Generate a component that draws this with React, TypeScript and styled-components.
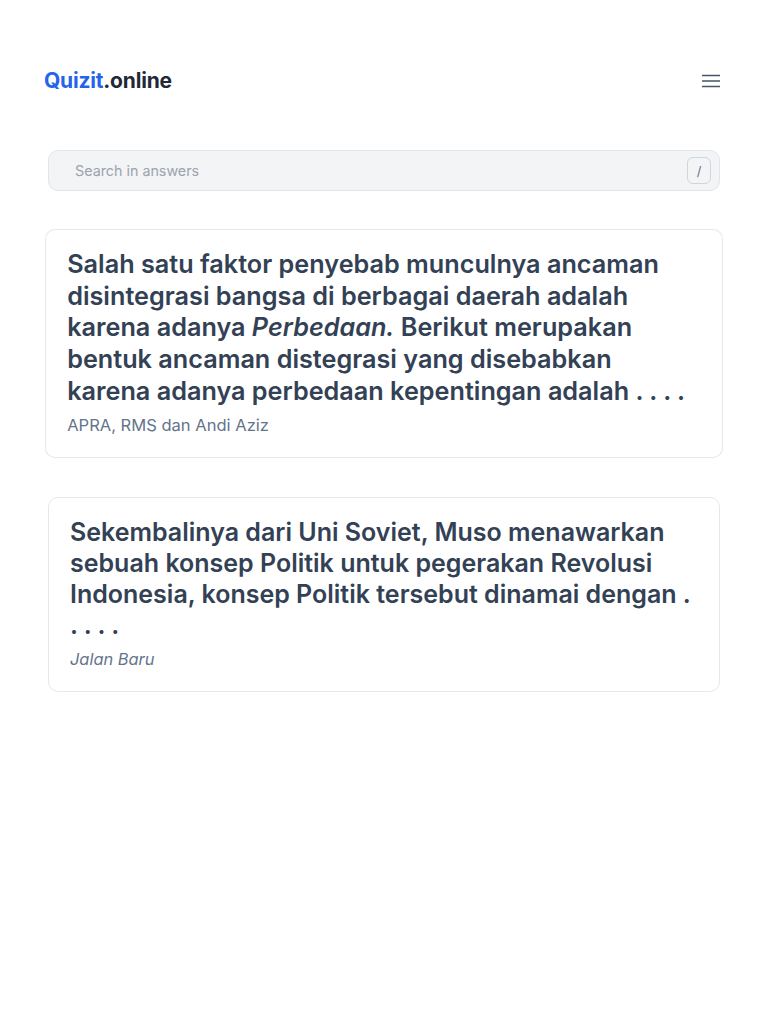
import React from 'react';
import styled, { createGlobalStyle } from 'styled-components';

const GlobalStyle = createGlobalStyle`
    html, body {
        margin: 0;
        padding: 0;
        background: #ffffff;
        font-family: Inter, "Noto Sans", "Liberation Sans", sans-serif;
        -webkit-font-smoothing: antialiased;
    }
    * { box-sizing: border-box; }
`;

const Page = styled.div`
    padding: 0 48px;
`;

const Header = styled.header`
    height: 150px;
    margin: 0 -1px 0 -4px;
    padding-top: 66px;
    display: flex;
    justify-content: space-between;
    align-items: flex-start;
`;

const Logo = styled.a`
    font-size: 21px;
    font-weight: 700;
    line-height: 30px;
    letter-spacing: -0.2px;
    color: #1f2937;
    text-decoration: none;
    span {
        color: #2563eb;
    }
`;

const MenuButton = styled.button`
    border: 0;
    background: none;
    padding: 0;
    margin-top: 5px;
    width: 20px;
    height: 20px;
    color: #475569;
    cursor: pointer;
`;

const SearchBox = styled.label`
    height: 41px;
    display: flex;
    align-items: center;
    padding: 0 8px 0 24px;
    background: #f3f4f6;
    border: 1px solid #e2e4e9;
    border-radius: 10px;
`;

const SearchInput = styled.input`
    flex: 1;
    border: 0;
    background: transparent;
    outline: none;
    font-family: inherit;
    font-size: 14.3px;
    color: #374151;
    &::placeholder {
        color: #9ca3af;
    }
`;

const Kbd = styled.kbd`
    width: 24px;
    height: 27px;
    display: flex;
    align-items: center;
    justify-content: center;
    border: 1px solid #d1d5db;
    border-radius: 6px;
    background: #f3f4f6;
    font-family: inherit;
    font-size: 13px;
    color: #6b7280;
`;

const List = styled.div`
    display: flex;
    flex-direction: column;
    gap: 40px;
    padding-top: 39px;
`;

const Card = styled.article<{ $raised?: boolean }>`
    background: #fff;
    border: 1px solid #e5e7eb;
    border-radius: 10px;
    padding: 19px 21px 19.5px;
    transform: ${p => (p.$raised ? 'scale(1.009)' : 'none')};
`;

const Question = styled.h2`
    margin: 0;
    font-size: 25px;
    line-height: 31.2px;
    font-weight: 600;
    color: #334155;
    em {
        font-style: italic;
    }
`;

const Answer = styled.p<{ $italic?: boolean }>`
    margin: 6px 0 0;
    font-size: 16.4px;
    line-height: 24px;
    color: #64748b;
    font-style: ${p => (p.$italic ? 'italic' : 'normal')};
`;

const MenuIcon = () => (
    <svg width="20" height="20" viewBox="0 0 20 20" fill="none" stroke="currentColor" strokeWidth="1.6">
        <path d="M1 4.5h18M1 10h18M1 15.5h18" />
    </svg>
);

export default function App() {
    return (
        <Page>
            <GlobalStyle />
            <Header>
                <Logo href="#"><span>Quizit</span>.online</Logo>
                <MenuButton aria-label="Menu"><MenuIcon /></MenuButton>
            </Header>

            <SearchBox>
                <SearchInput placeholder="Search in answers" />
                <Kbd>/</Kbd>
            </SearchBox>

            <List>
                <Card $raised>
                    <Question>
                        Salah satu faktor penyebab munculnya ancaman disintegrasi bangsa di berbagai daerah adalah karena adanya <em>Perbedaan.</em> Berikut merupakan bentuk ancaman distegrasi yang disebabkan karena adanya perbedaan kepentingan adalah . . . .
                    </Question>
                    <Answer>APRA, RMS dan Andi Aziz</Answer>
                </Card>
                <Card>
                    <Question>
                        Sekembalinya dari Uni Soviet, Muso menawarkan sebuah konsep Politik untuk pegerakan Revolusi Indonesia, konsep Politik tersebut dinamai dengan . . . . .
                    </Question>
                    <Answer $italic>Jalan Baru</Answer>
                </Card>
            </List>
        </Page>
    );
}
